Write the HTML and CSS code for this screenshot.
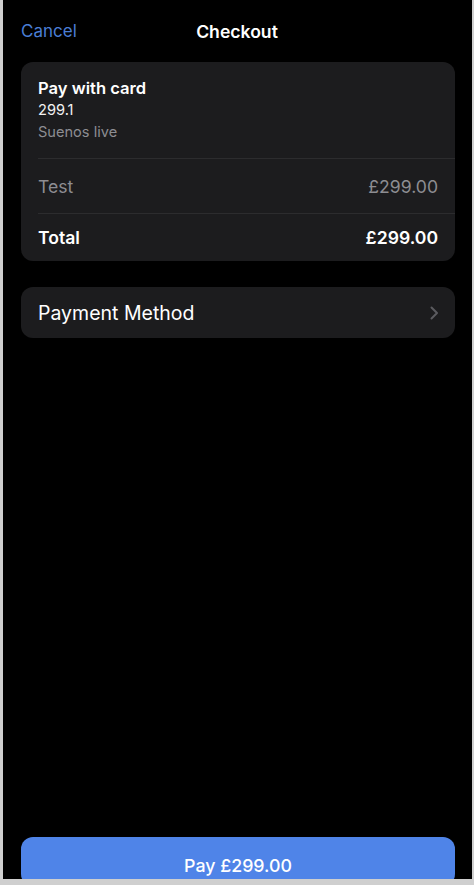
FILE: index.html
```html
<!DOCTYPE html>
<html lang="en">
<head>
    <meta charset="UTF-8">
    <meta name="viewport" content="width=device-width, initial-scale=1.0">
    <title>Checkout</title>
    <link rel="stylesheet" href="styles.css">
</head>
<body>
    <div class="screen">
        <header class="nav">
            <span class="cancel">Cancel</span>
            <h1>Checkout</h1>
        </header>

        <main>
            <section class="card summary">
                <div class="merchant">
                    <div class="title">Pay with card</div>
                    <div class="amount">299.1</div>
                    <div class="subtitle">Suenos live</div>
                </div>
                <div class="row muted">
                    <span>Test</span>
                    <span>£299.00</span>
                </div>
                <div class="row total">
                    <span>Total</span>
                    <span>£299.00</span>
                </div>
            </section>

            <section class="card method">
                <span>Payment Method</span>
                <svg class="chevron" width="9" height="14" viewBox="0 0 9 14">
                    <path d="M1.5 1.5 L7 7 L1.5 12.5" fill="none" stroke="#5b5b5f" stroke-width="2" stroke-linecap="round" stroke-linejoin="round"/>
                </svg>
            </section>
        </main>

        <div class="footer">
            <button class="pay-button">Pay £299.00</button>
        </div>
    </div>
</body>
</html>
```

FILE: styles.css
```css
body {
    margin: 0;
    background-color: #cfcfcf;
    font-family: "Inter", "Liberation Sans", Arial, sans-serif;
    color: #ffffff;
}

.screen {
    display: flex;
    flex-direction: column;
    width: 469px;
    height: 879px;
    margin-left: 3px;
    background-color: #000000;
    overflow: hidden;
}

.nav {
    display: flex;
    align-items: center;
    justify-content: center;
    position: relative;
    height: 62px;
}

.cancel {
    position: absolute;
    left: 18px;
    top: 21px;
    font-size: 17px;
    color: #4a7ed6;
}

.nav h1 {
    margin: 0;
    margin-left: -1px;
    font-size: 17.6px;
    font-weight: 600;
}

main {
    flex: 1;
    padding: 0 17px 0 18px;
}

.card {
    background-color: #1c1c1e;
    border-radius: 12px;
}

.summary {
    padding-left: 17px;
    height: 199px;
    box-sizing: border-box;
}

.merchant {
    padding-top: 16px;
    padding-bottom: 15px;
    border-bottom: 1px solid #2c2c2e;
}

.title {
    font-size: 16.6px;
    font-weight: 600;
    line-height: 20px;
}

.amount {
    font-size: 14.6px;
    line-height: 24px;
    color: #f2f2f2;
}

.subtitle {
    font-size: 14.6px;
    line-height: 21px;
    color: #8d8d92;
}

.row {
    display: flex;
    justify-content: space-between;
    align-items: center;
    height: 54px;
    padding-right: 17px;
    font-size: 17.6px;
}

.muted {
    color: #8d8d92;
    border-bottom: 1px solid #2c2c2e;
}

.total {
    font-weight: 600;
    height: 46px;
}

.method {
    display: flex;
    justify-content: space-between;
    align-items: center;
    margin-top: 26px;
    height: 51px;
    padding: 0 17px;
    font-size: 19.5px;
}

.chevron {
    margin-right: -1px;
}

.footer {
    padding: 0 17px 0 18px;
}

.pay-button {
    display: block;
    width: 100%;
    height: 49px;
    margin-bottom: -7px;
    padding-top: 8px;
    border: none;
    border-radius: 12px;
    background-color: #4f84e8;
    color: #ffffff;
    font-family: "Inter", "Liberation Sans", Arial, sans-serif;
    font-size: 17.8px;
    font-weight: 500;
}
```
